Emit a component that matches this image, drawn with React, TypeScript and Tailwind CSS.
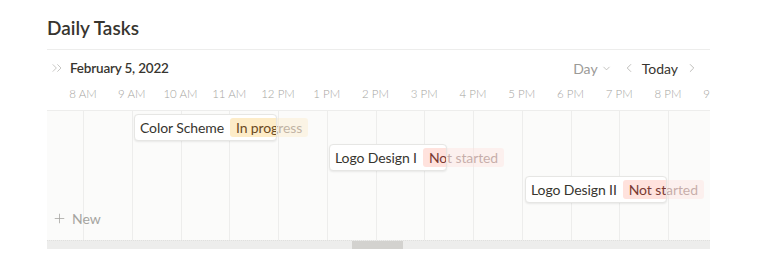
import { ChevronsRight, ChevronDown, ChevronLeft, ChevronRight, Plus } from 'lucide-react';

const HOURS = ['8 AM', '9 AM', '10 AM', '11 AM', '12 PM', '1 PM', '2 PM', '3 PM', '4 PM', '5 PM', '6 PM', '7 PM', '8 PM', '9 PM'];

type Status = 'progress' | 'todo';

interface Task { title: string; status: Status; left: number; top: number; width: number; }

const TASKS: Task[] = [
  { title: 'Color Scheme', status: 'progress', left: 87, top: 3, width: 143 },
  { title: 'Logo Design I', status: 'todo', left: 282, top: 33, width: 118 },
  { title: 'Logo Design II', status: 'todo', left: 478, top: 65, width: 142 },
];

function Badge({ status }: { status: Status }) {
  return status === 'progress' ? (
    <span className="rounded-[3px] bg-[#fdecc8] px-[6px] leading-[19px] text-[#6b4a22]">In progress</span>
  ) : (
    <span className="rounded-[3px] bg-[#ffe2dd] px-[6px] leading-[19px] text-[#7a3a33]">Not started</span>
  );
}

function TaskCard({ task }: { task: Task }) {
  const content = (
    <>
      <span className="text-[#37352f]">{task.title}</span>
      <Badge status={task.status} />
    </>
  );
  return (
    <div className="absolute h-[27px]" style={{ left: task.left, top: task.top, width: task.width }}>
      {/* overflow part shows faded behind the card */}
      <div className="absolute inset-0 flex items-center gap-[6px] whitespace-nowrap border border-transparent px-[5px] text-[14px] tracking-[-0.1px] opacity-40">
        {content}
      </div>
      <div className="relative flex h-full items-center gap-[6px] overflow-hidden whitespace-nowrap rounded-[4px] border border-[#e6e6e4] bg-white px-[5px] text-[14px] tracking-[-0.1px] shadow-[0_1px_2px_rgba(15,15,15,0.08)]">
        {content}
      </div>
    </div>
  );
}

export default function App() {
  return (
    <div className="min-h-[266px] bg-white font-['Lato','Noto_Sans',sans-serif]">
      <div className="mx-[47px] w-[663px]">
        <h1 className="pt-[15px] pb-[8px] text-[19px] font-semibold leading-[26px] text-[#37352f]">Daily Tasks</h1>
        <div className="border-b border-[#ededec]" />

        {/* Toolbar */}
        <div className="mt-[7px] flex h-[22px] items-center">
          <ChevronsRight className="ml-[2px] h-[16px] w-[16px] text-[#bdbcb8]" strokeWidth={1.25} />
          <span className="ml-[5px] text-[13.5px] font-semibold tracking-[-0.2px] text-[#37352f]">February 5, 2022</span>
          <div className="ml-auto flex items-center pr-[11px] text-[14px]">
            <span className="text-[#9b9a97]">Day</span>
            <ChevronDown className="ml-[3px] h-[11px] w-[11px] text-[#b5b4b0]" strokeWidth={1.75} />
            <ChevronLeft className="ml-[10px] h-[14px] w-[14px] text-[#b5b4b0]" strokeWidth={1.5} />
            <span className="ml-[6px] text-[#37352f]">Today</span>
            <ChevronRight className="ml-[7px] h-[14px] w-[14px] text-[#b5b4b0]" strokeWidth={1.5} />
          </div>
        </div>

        {/* Hours */}
        <div className="flex h-[31px] items-start overflow-hidden whitespace-nowrap pl-[11.6px] pt-[7px] text-[11.5px] font-light leading-[15px] text-[#a5a4a0]">
          {HOURS.map((h) => (
            <span key={h} className="w-[48.75px] shrink-0 text-center">{h}</span>
          ))}
        </div>

        {/* Grid */}
        <div className="relative h-[130px] overflow-hidden border-t border-[#ededec] bg-[#fbfbfa]">
          <div className="flex h-full">
            <div className="h-full w-[36px] shrink-0" />
            {HOURS.map((h) => (
              <div key={h} className="h-full w-[48.75px] shrink-0 border-l border-[#ededec]" />
            ))}
          </div>
          {TASKS.map((t) => (
            <TaskCard key={t.title} task={t} />
          ))}
          <button className="absolute bottom-[11px] left-[5px] flex items-center gap-[5px] text-[14px] text-[#a5a4a0]">
            <Plus className="h-[15px] w-[15px]" strokeWidth={1.25} />
            New
          </button>
        </div>

        {/* Scrollbar */}
        <div className="flex h-[9px] border-t border-dotted border-[#e0e0de] bg-[#ededec]">
          <div className="ml-[305px] h-full w-[51px] bg-[#d3d2cf]" />
        </div>
      </div>
    </div>
  );
}
